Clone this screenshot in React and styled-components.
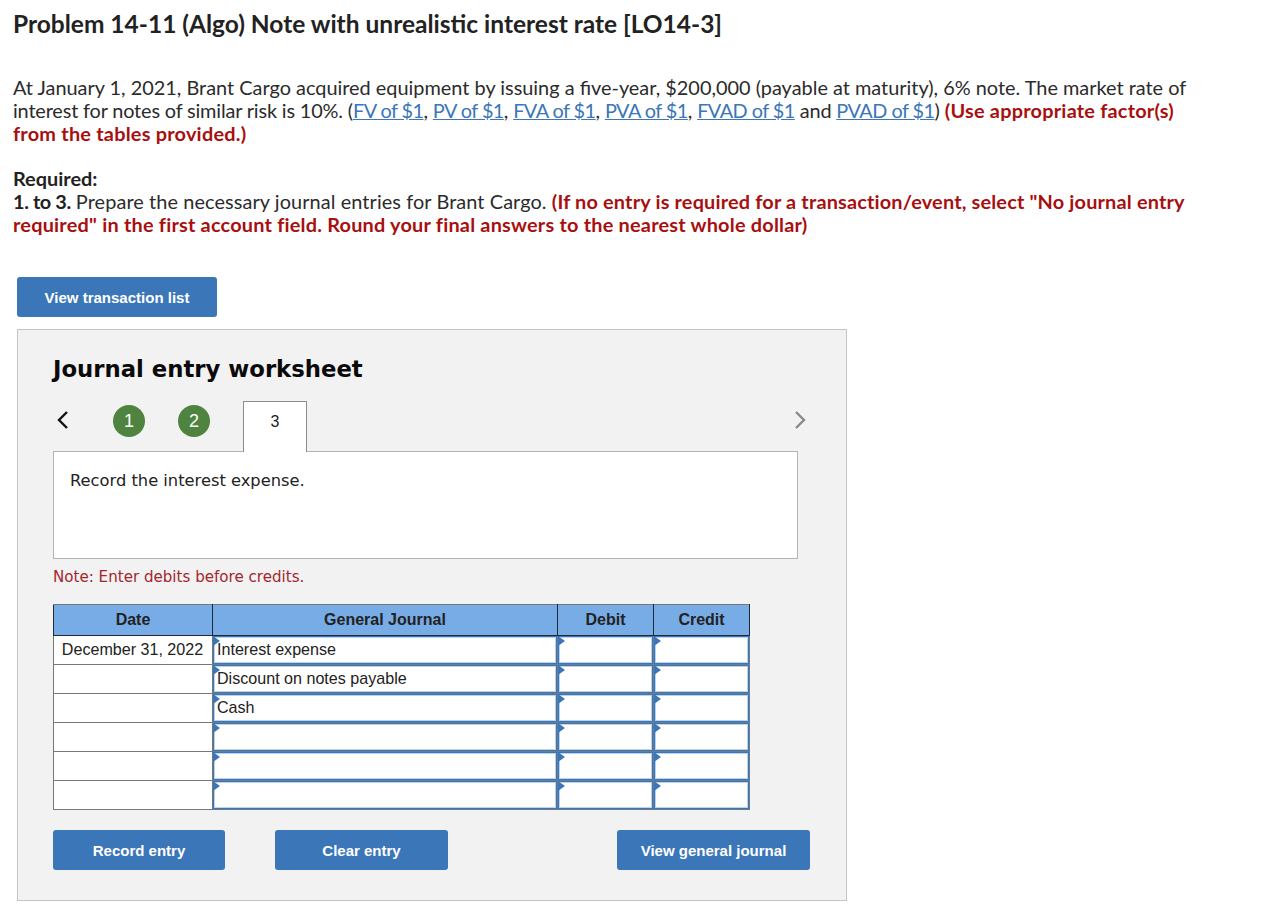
import React from "react";
import styled, { createGlobalStyle } from "styled-components";

const Global = createGlobalStyle`
  html, body { margin: 0; padding: 0; background: #fff; }
  body { font-family: "Lato", "Open Sans", sans-serif; color: #222; }
`;

const Page = styled.div`
  width: 1281px;
  height: 913px;
  overflow: hidden;
  box-sizing: border-box;
  padding: 9px 0 0 13px;
`;
const Title = styled.h1`
  margin: 0;
  font-size: 24.5px;
  line-height: 30px;
  font-weight: 700;
  color: #222;
  white-space: nowrap;
`;
const Para = styled.p`
  margin: ${(p) => p.$top}px 0 0;
  font-size: 19.9px;
  line-height: 23px;
  white-space: nowrap;
  color: #2b2b2b;
`;
const Spaced = styled.span`
  letter-spacing: ${(p) => p.$ls}px;
`;
const Link = styled.a`
  color: #3a76b8;
  text-decoration: underline;
  letter-spacing: -0.55px;
`;
const Red = styled.b`
  color: #a80f0f;
  font-weight: 700;
  letter-spacing: ${(p) => p.$ls ?? 0.22}px;
`;
const Dark = styled.b`
  font-weight: 700;
  color: #222;
  letter-spacing: ${(p) => p.$ls || 0}px;
`;
const Button = styled.button`
  height: 40px;
  width: ${(p) => p.$w}px;
  padding: 0;
  border: 0;
  border-radius: 3px;
  background: #3b76b9;
  color: #fff;
  font: 700 15px "Liberation Sans", Arial, sans-serif;
`;
const TopAction = styled.div`
  margin: 41px 0 12px 4px;
`;
const Panel = styled.section`
  box-sizing: border-box;
  width: 830px;
  height: 572px;
  margin-left: 4px;
  padding: 22px 35px 0;
  background: #f2f2f2;
  border: 1px solid #c4c4c4;
`;
const Heading = styled.h2`
  margin: 0;
  height: 35px;
  font: 700 22.75px/35px "DejaVu Sans", Verdana, sans-serif;
  color: #0a0a0a;
  white-space: nowrap;
`;
const TabRow = styled.div`
  display: flex;
  align-items: flex-start;
  height: 50px;
  margin-top: 14px;
  width: 754px;
`;
const Chevron = styled.svg`
  width: 14px;
  height: 22px;
  flex: none;
  margin: 8px 0 0 3px;
`;
const Step = styled.div`
  flex: none;
  width: 32px;
  height: 32px;
  margin: 4px 0 0 ${(p) => p.$left}px;
  border-radius: 50%;
  background: #4e8340;
  color: #fff;
  display: flex;
  align-items: center;
  justify-content: center;
  font: 18px "Liberation Sans", Arial, sans-serif;
`;
const ActiveTab = styled.div`
  flex: none;
  box-sizing: border-box;
  width: 64px;
  height: 51px;
  margin: 0 0 0 33px;
  padding-bottom: 11px;
  background: #fff;
  border: 1px solid #8c8c8c;
  border-bottom: 0;
  display: flex;
  align-items: center;
  justify-content: center;
  font: 16px "Liberation Sans", Arial, sans-serif;
  color: #222;
  position: relative;
  z-index: 1;
`;
const Spacer = styled.div`
  flex: 1;
`;
const Prompt = styled.div`
  box-sizing: border-box;
  width: 745px;
  height: 108px;
  padding: 18px 16px;
  background: #fff;
  border: 1px solid #b4b4b4;
  font: 16.3px/22px "DejaVu Sans", Verdana, sans-serif;
  color: #222;
`;
const Note = styled.div`
  margin-top: 7px;
  height: 22px;
  font: 15.1px/22px "DejaVu Sans", Verdana, sans-serif;
  color: #a3262e;
`;
const Table = styled.table`
  margin-top: 16px;
  width: 697px;
  table-layout: fixed;
  border-collapse: collapse;
  font: 16.1px "Liberation Sans", Arial, sans-serif;
  color: #222;
`;
const Th = styled.th`
  height: 31px;
  padding: 0;
  box-sizing: border-box;
  background: #78ace6;
  border: 1px solid #1f2a36;
  border-top-color: #777;
  font-weight: 700;
  font-size: 16px;
`;
const DateCell = styled.td`
  height: 28px;
  padding: 0 1px 2px 0;
  box-sizing: border-box;
  background: #fff;
  border: 1px solid #777;
  text-align: center;
`;
const EntryCell = styled.td`
  height: 28px;
  padding: 0;
  background: #fff;
  border: 1px solid #6e7b88;
`;
const Entry = styled.div`
  position: relative;
  box-sizing: border-box;
  height: 28px;
  padding-left: 3px;
  line-height: 24px;
  border: 1px solid #3b76b9;
  box-shadow: inset 0 0 0 1px #bcd3ee;
  white-space: nowrap;
  &::before {
    content: "";
    position: absolute;
    left: -1px;
    top: -1px;
    border-left: 7px solid #3b76b9;
    border-top: 5px solid transparent;
    border-bottom: 5px solid transparent;
  }
`;
const Actions = styled.div`
  display: flex;
  justify-content: flex-start;
  margin-top: 20px;
`;
const ActionGap = styled.div`
  width: ${(p) => p.$w}px;
`;

const rows = [
  ["December 31, 2022", "Interest expense"],
  ["", "Discount on notes payable"],
  ["", "Cash"],
  ["", ""],
  ["", ""],
  ["", ""],
];

export default function App() {
  return (
    <Page>
      <Global />
      <Title>Problem 14-11 (Algo) Note with unrealistic interest rate [LO14-3]</Title>
      <Para $top={37}>
        At January 1, 2021, Brant Cargo acquired equipment by issuing a five-year, $200,000 (payable at maturity), 6% note. The market rate of
        <br />
        <Spaced $ls={-0.16}>
          interest for notes of similar risk is 10%. (<Link href="#">FV of $1</Link>, <Link href="#">PV of $1</Link>, <Link href="#">FVA of $1</Link>, <Link href="#">PVA of $1</Link>, <Link href="#">FVAD of $1</Link> and <Link href="#">PVAD of $1</Link>)
        </Spaced>{" "}
        <Red>(Use appropriate factor(s)</Red>
        <br />
        <Red>from the tables provided.)</Red>
      </Para>
      <Para $top={22}>
        <Dark>Required:</Dark>
        <br />
        <Dark $ls={-0.4}>1. to 3.</Dark> <Spaced $ls={0.09}>Prepare the necessary journal entries for Brant Cargo.</Spaced> <Red $ls={0.17}>(If no entry is required for a transaction/event, select "No journal entry</Red>
        <br />
        <Red $ls={0.21}>required" in the first account field. Round your final answers to the nearest whole dollar)</Red>
      </Para>
      <TopAction>
        <Button $w={200}>View transaction list</Button>
      </TopAction>
      <Panel>
        <Heading>Journal entry worksheet</Heading>
        <TabRow>
          <Chevron viewBox="0 0 14 22">
            <path d="M11 3 3 11l8 8" fill="none" stroke="#111" strokeWidth="2.4" />
          </Chevron>
          <Step $left={43}>1</Step>
          <Step $left={33}>2</Step>
          <ActiveTab>3</ActiveTab>
          <Spacer />
          <Chevron viewBox="0 0 14 22">
            <path d="M3 3l8 8-8 8" fill="none" stroke="#8a8a8a" strokeWidth="2.4" />
          </Chevron>
        </TabRow>
        <Prompt>Record the interest expense.</Prompt>
        <Note>Note: Enter debits before credits.</Note>
        <Table>
          <colgroup>
            <col width="159" />
            <col width="345" />
            <col width="96" />
            <col width="96" />
          </colgroup>
          <thead>
            <tr>
              <Th>Date</Th>
              <Th>General Journal</Th>
              <Th>Debit</Th>
              <Th>Credit</Th>
            </tr>
          </thead>
          <tbody>
            {rows.map(([date, account], i) => (
              <tr key={i}>
                <DateCell>{date}</DateCell>
                <EntryCell><Entry>{account}</Entry></EntryCell>
                <EntryCell><Entry /></EntryCell>
                <EntryCell><Entry /></EntryCell>
              </tr>
            ))}
          </tbody>
        </Table>
        <Actions>
          <Button $w={172}>Record entry</Button>
          <ActionGap $w={50} />
          <Button $w={173}>Clear entry</Button>
          <ActionGap $w={169} />
          <Button $w={193}>View general journal</Button>
        </Actions>
      </Panel>
    </Page>
  );
}
